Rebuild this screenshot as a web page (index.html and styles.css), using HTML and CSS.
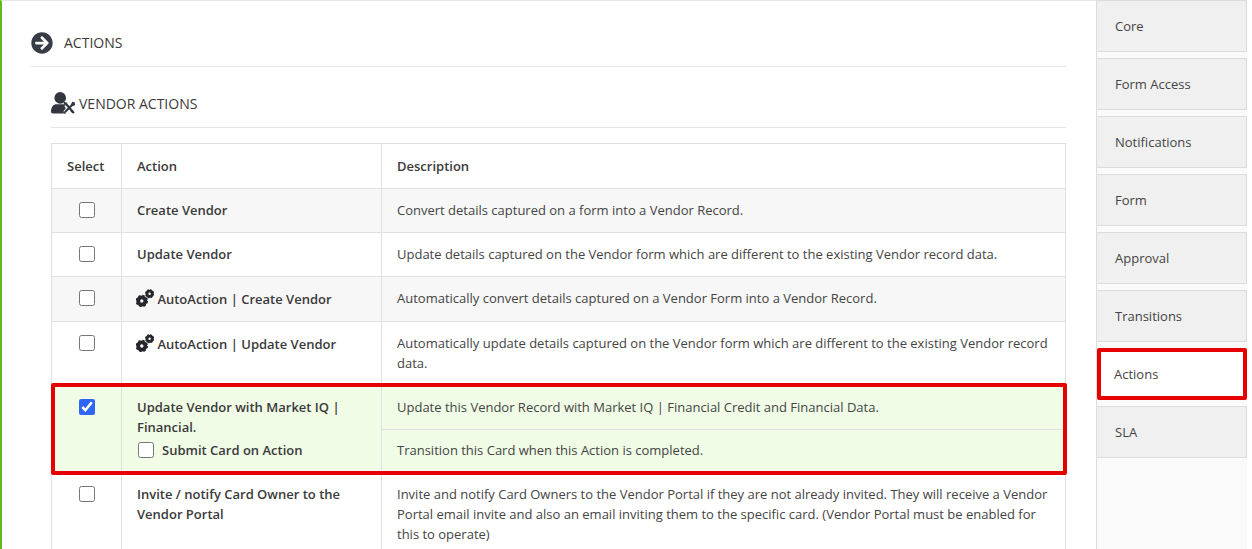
FILE: index.html
```html
<!DOCTYPE html>
<html lang="en">
<head>
<meta charset="utf-8">
<title>Actions</title>
<link rel="stylesheet" href="styles.css">
</head>
<body>
<div class="page">
  <main class="main">
    <h2 class="section-title">
      <svg class="icon-arrow" viewBox="0 0 512 512"><path d="M256 8c137 0 248 111 248 248S393 504 256 504 8 393 8 256 119 8 256 8zm-28.9 143.6l75.5 72.4H120c-13.3 0-24 10.7-24 24v16c0 13.3 10.7 24 24 24h182.6l-75.5 72.4c-9.7 9.3-9.9 24.8-.4 34.3l11 10.9c9.4 9.4 24.6 9.4 33.9 0L404.3 273c9.4-9.4 9.4-24.6 0-33.9L271.6 106.3c-9.4-9.4-24.6-9.4-33.9 0l-11 10.9c-9.3 9.6-9.1 25.1.4 34.4z"/></svg>
      <span>ACTIONS</span>
    </h2>
    <div class="sub">
      <h3 class="sub-title">
        <svg class="icon-user" viewBox="0 0 24 22">
          <circle cx="9.2" cy="5.900" r="5.800"/>
          <path d="M0 19.500c0-4.800 2.600-7.300 5.500-7.300h7.500c.8 0 1.400.1 1.900.3l-1.500 1.800 1.500 2-2.800 3.300.8 1.900H1.800C.7 21.500 0 20.700 0 19.500z"/>
          <path class="tool" d="M14.600 11.600l7.400 8.400M21.800 12.200l-7.800 7.800"/>
          <path d="M12.800 9.800l3.400 1-.8 3-2.900-2.600zM23.800 10.300l.2 3-2.700 1-1.500-1.500 1.500-3zM20.800 17.800l3 2.500-1.700 1.500-2.700-2.600zM12.800 19l2.300 2-1.300.9-2-1.600z"/>
        </svg>
        <span>VENDOR ACTIONS</span>
      </h3>
      <div class="table-wrap">
        <table class="grid">
          <colgroup><col class="c1"><col class="c2"><col class="c3"></colgroup>
          <thead>
            <tr><th class="sel">Select</th><th>Action</th><th>Description</th></tr>
          </thead>
          <tbody>
            <tr class="alt">
              <td class="sel"><input type="checkbox" class="chk"></td>
              <td class="act">Create Vendor</td>
              <td>Convert details captured on a form into a Vendor Record.</td>
            </tr>
            <tr>
              <td class="sel"><input type="checkbox" class="chk"></td>
              <td class="act">Update Vendor</td>
              <td>Update details captured on the Vendor form which are different to the existing Vendor record data.</td>
            </tr>
            <tr class="alt">
              <td class="sel"><input type="checkbox" class="chk"></td>
              <td class="act auto"><svg class="icon-cogs" viewBox="0 0 18 18"><circle class="g1" cx="5.800" cy="12" r="3.600"/><circle class="g1t" cx="5.800" cy="12" r="5.300"/><circle class="g2" cx="13.600" cy="4.700" r="2.600"/><circle class="g2t" cx="13.600" cy="4.700" r="3.800"/></svg> AutoAction | Create Vendor</td>
              <td>Automatically convert details captured on a Vendor Form into a Vendor Record.</td>
            </tr>
            <tr>
              <td class="sel"><input type="checkbox" class="chk"></td>
              <td class="act auto"><svg class="icon-cogs" viewBox="0 0 18 18"><circle class="g1" cx="5.800" cy="12" r="3.600"/><circle class="g1t" cx="5.800" cy="12" r="5.300"/><circle class="g2" cx="13.600" cy="4.700" r="2.600"/><circle class="g2t" cx="13.600" cy="4.700" r="3.800"/></svg> AutoAction | Update Vendor</td>
              <td>Automatically update details captured on the Vendor form which are different to the existing Vendor record data.</td>
            </tr>
            <tr class="hi">
              <td class="sel" rowspan="2"><input type="checkbox" class="chk" checked></td>
              <td class="act" rowspan="2">
                Update Vendor with Market IQ | Financial.
                <label class="submit"><input type="checkbox" class="chk"> Submit Card on Action</label>
              </td>
              <td>Update this Vendor Record with Market IQ | Financial Credit and Financial Data.</td>
            </tr>
            <tr class="hi">
              <td class="last">Transition this Card when this Action is completed.</td>
            </tr>
            <tr>
              <td class="sel"><input type="checkbox" class="chk"></td>
              <td class="act">Invite / notify Card Owner to the Vendor Portal</td>
              <td>Invite and notify Card Owners to the Vendor Portal if they are not already invited. They will receive a Vendor Portal email invite and also an email inviting them to the specific card. (Vendor Portal must be enabled for this to operate)</td>
            </tr>
          </tbody>
        </table>
        <div class="redbox"></div>
      </div>
    </div>
  </main>
  <aside class="tabs">
    <a class="tab">Core</a>
    <a class="tab">Form Access</a>
    <a class="tab">Notifications</a>
    <a class="tab">Form</a>
    <a class="tab">Approval</a>
    <a class="tab">Transitions</a>
    <a class="tab active">Actions</a>
    <a class="tab">SLA</a>
  </aside>
</div>
</body>
</html>
```
FILE: styles.css
```css
* { box-sizing: border-box; }
html, body { margin: 0; padding: 0; height: 549px; overflow: hidden; background: #fff; }
body { font-family: "Open Sans", sans-serif; font-size: 13px; line-height: 20px; color: #3d3d3d; }
.page { display: flex; width: 1247px; height: 549px; overflow: hidden; }
.main { width: 1096px; flex: none; border-left: 2px solid #62bb1e; border-top: 1px solid #e6e6e6; padding: 0 30px 0 29px; }
.section-title { margin: 0; height: 66px; padding-top: 31px; border-bottom: 1px solid #e4e4e4; display: flex; align-items: flex-start; font-size: 14px; font-weight: 400; line-height: 22px; color: #3a3a3a; }
.icon-arrow { width: 22px; height: 22px; fill: #383c46; margin-right: 11px; flex: none; }
.sub { margin-left: 20px; }
.sub-title { margin: 0; height: 61px; padding-top: 26px; border-bottom: 1px solid #e4e4e4; display: flex; align-items: flex-start; font-size: 14px; font-weight: 400; line-height: 22px; color: #3a3a3a; }
.icon-user { width: 24px; height: 22px; fill: #33363e; margin-right: 4px; margin-top: -1px; flex: none; }
.icon-user .tool { fill: none; stroke: #33363e; stroke-width: 2.200; }
.table-wrap { position: relative; margin-top: 15px; }
.grid { width: 1015px; border-collapse: collapse; table-layout: fixed; }
.c1 { width: 70px; }
.c2 { width: 260px; }
.grid th, .grid td { border: 1px solid #e0e0e0; padding: 11px 15px 12px; vertical-align: top; text-align: left; font-size: 13px; line-height: 20px; }
.grid th { padding-top: 12px; font-weight: 600; color: #3a3a3a; }
.grid td { font-weight: 400; color: #444; }
.grid td.sel { padding: 13px 0 0; }
.grid .act { font-weight: 600; color: #3a3a3a; }
.grid .act.auto { padding-top: 12px; }
.grid .last { padding-top: 10px; }
.alt td { background: #f7f7f7; }
.hi td { background: #f0fce6; }
.chk { display: block; width: 16px; height: 16px; margin: 0 auto; accent-color: #2f66f5; }
.submit { display: flex; align-items: center; gap: 8px; margin-top: 3px; }
.submit .chk { margin: 0 0 0 1px; }
.icon-cogs { width: 18px; height: 18px; vertical-align: -3px; margin-left: -1px; }
.g1, .g2 { fill: none; stroke: #26282c; }
.g1 { stroke-width: 3.800; }
.g2 { stroke-width: 2.800; }
.g1t, .g2t { fill: none; stroke: #26282c; }
.g1t { stroke-width: 1.800; stroke-dasharray: 2.200 1.960; }
.g2t { stroke-width: 1.500; stroke-dasharray: 1.800 1.180; }
.redbox { position: absolute; left: 0; top: 240px; width: 1016px; height: 92px; border: 4px solid #e60000; border-radius: 2px; }
.tabs { flex: 1; background: #fafafa; border-left: 1px solid #ddd; border-top: 1px solid #e6e6e6; display: flex; flex-direction: column; gap: 6px; }
.tab { height: 52px; margin-top: -1px; margin-bottom: 1px; margin-left: -1px; display: flex; align-items: center; padding-left: 18px; background: #f0f0f0; border: 1px solid #dcdcdc; color: #444; font-size: 13px; }
.tab.active { background: #fff; border: 4px solid #e60000; border-radius: 2px; padding-left: 13px; margin-left: 0; }
```
